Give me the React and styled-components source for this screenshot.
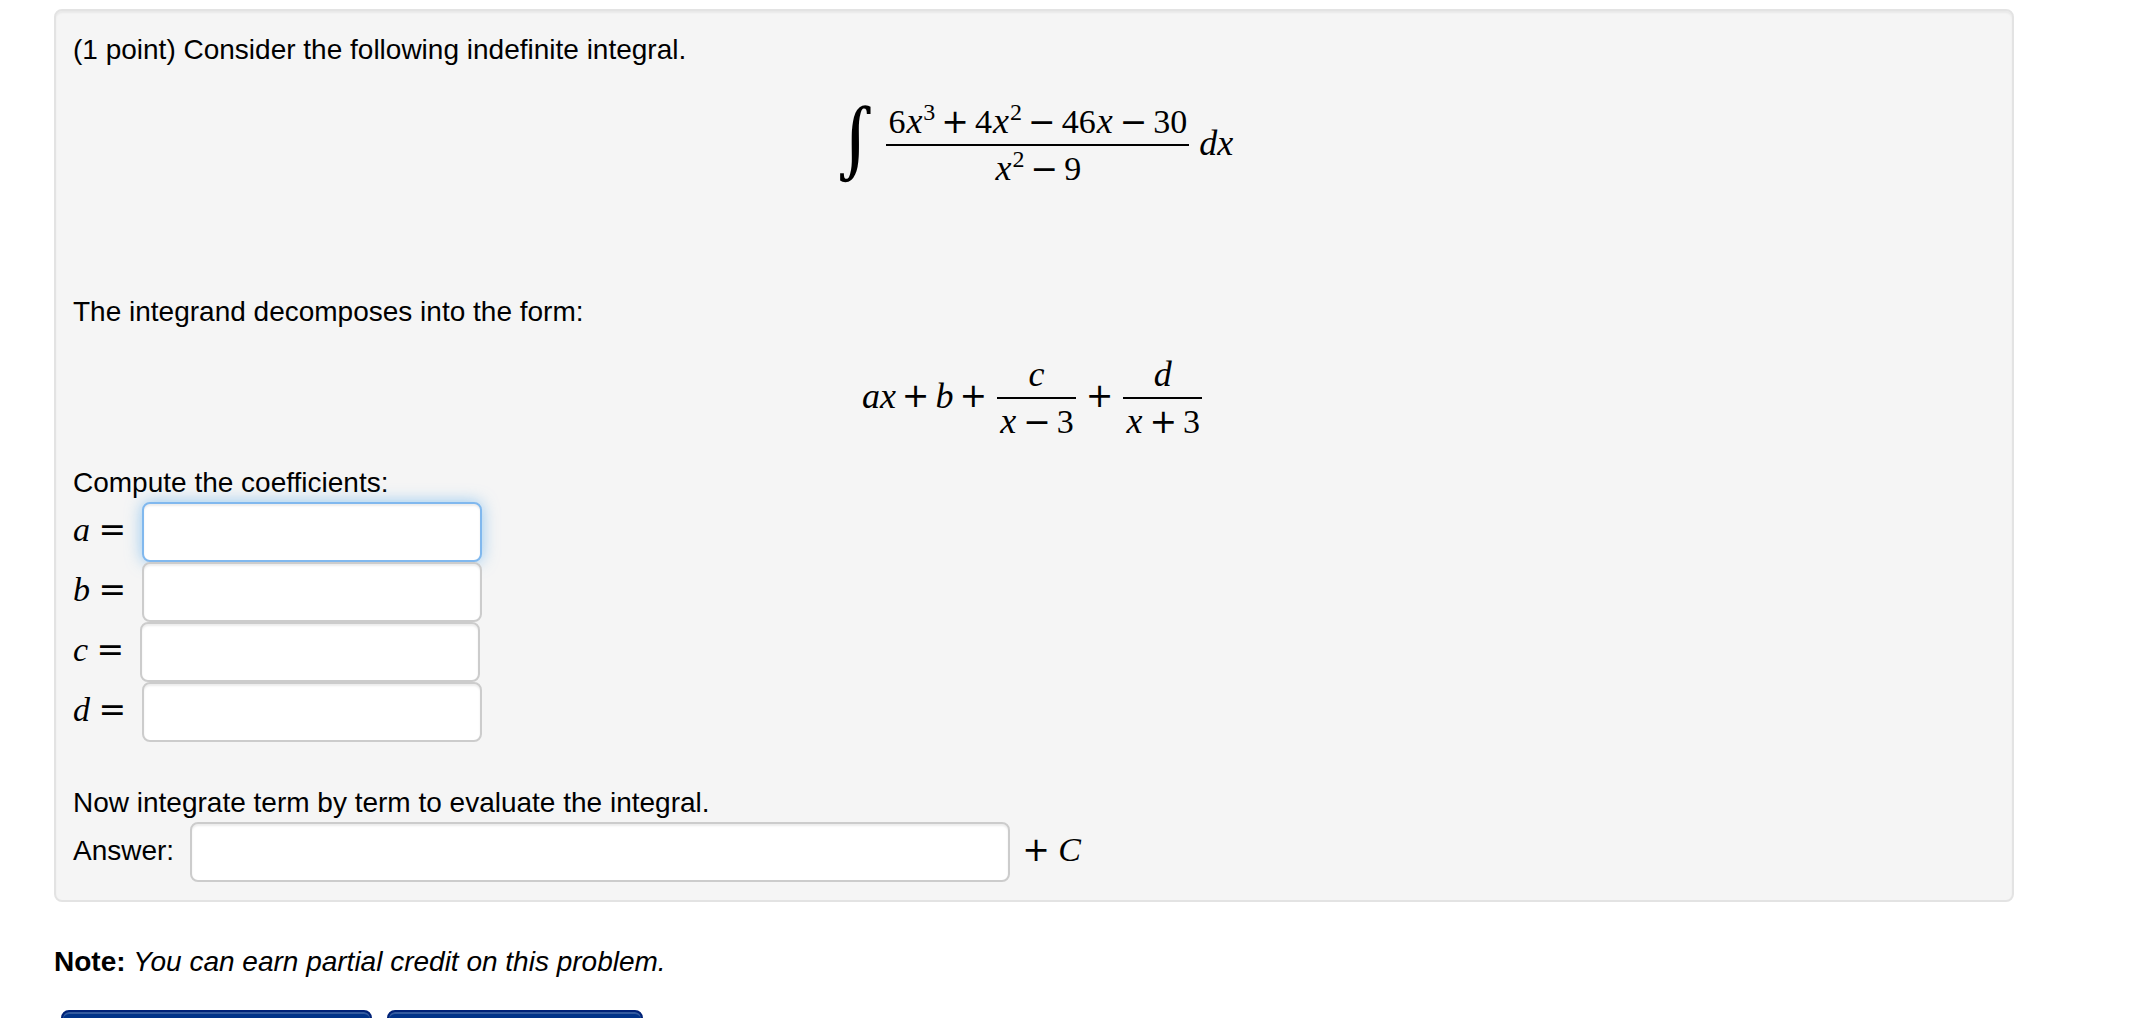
import React, { useState } from 'react';
import styled, { createGlobalStyle } from 'styled-components';

const GlobalStyle = createGlobalStyle`
  * {
    box-sizing: border-box;
  }

  body {
    margin: 0;
    background-color: #ffffff;
    color: #000000;
    font-family: 'Liberation Sans', Arial, sans-serif;
    font-size: 28px;
    line-height: 40px;
  }
`;

const Page = styled.main`
  height: 100vh;
  padding: 9px 122px 0 54px;
  overflow: hidden;
`;

const Problem = styled.section`
  padding: 18px 17px;
  background-color: #f5f5f5;
  border: 2px solid #e3e3e3;
  border-radius: 8px;
  box-shadow: inset 0 2px 2px rgba(0, 0, 0, 0.05);
`;

const Text = styled.p`
  margin: 0;
  padding-top: 2px;
  line-height: 38px;
`;

const MathText = styled.span`
  font-family: 'Liberation Serif', 'Times New Roman', serif;
  font-size: 34px;
  line-height: 40px;
  white-space: nowrap;

  sup {
    font-size: 24px;
    line-height: 0;
    vertical-align: 13px;
  }
`;

const Equation = styled(MathText)`
  display: flex;
  align-items: center;
  justify-content: center;
  margin: ${(props) => props.$margin};

  i {
    font-size: 36px;
    line-height: 0;
  }
`;

const Op = styled.span`
  padding: 0 ${(props) => (props.$tight ? '0' : '6px')};
  font-family: 'DejaVu Sans', sans-serif;
  font-size: 33px;
  line-height: 0;
`;

const Integral = styled.span`
  font-family: 'DejaVu Math TeX Gyre', 'DejaVu Serif', serif;
  font-size: 70px;
  line-height: 80px;
`;

const Fraction = styled.span`
  display: flex;
  flex-direction: column;
  margin: 0 ${(props) => (props.$wide ? '10px' : '4px')};
  text-align: center;

  i {
    margin: 0 1px;
  }
`;

const Numerator = styled.span`
  padding: 6px 2px 0;
  line-height: 44px;
  border-bottom: 2px solid #000000;
`;

const Denominator = styled.span`
  padding: 0 2px;
  line-height: 46px;
`;

const AnswerRow = styled.div`
  display: flex;
  align-items: center;
  height: 60px;
`;

const Label = styled.label`
  margin-right: 16px;
  padding-bottom: 2px;
`;

const Input = styled.input`
  width: ${(props) => (props.$wide ? '820px' : '340px')};
  height: 60px;
  padding: 8px 12px;
  background-color: #ffffff;
  border: 2px solid #cccccc;
  border-radius: 8px;
  box-shadow: inset 0 2px 2px rgba(0, 0, 0, 0.075);
  color: #555555;
  font: inherit;

  &:focus {
    border-color: #80b8ee;
    box-shadow: inset 0 2px 2px rgba(0, 0, 0, 0.075), 0 0 16px rgba(82, 168, 236, 0.6);
    outline: none;
  }
`;

const Constant = styled(MathText)`
  margin-left: 12px;
  padding-bottom: 4px;
`;

const IntegrateText = styled(Text)`
  margin-top: 40px;
`;

const Note = styled.p`
  margin: 40px 0 0;
`;

const ButtonGroup = styled.div`
  display: flex;
  gap: 15px;
  margin: 28px 0 0 7px;
`;

const Button = styled.button`
  width: ${(props) => props.$width};
  height: 60px;
  background-color: #003388;
  border: 2px solid #002277;
  border-radius: 8px;
  box-shadow: inset 0 2px 0 rgba(255, 255, 255, 0.2);
  color: #ffffff;
  font: inherit;
  cursor: pointer;
`;

const coefficients = ['a', 'b', 'c', 'd'];

const App = () => {
  const [answers, setAnswers] = useState({});

  const handleChange = (e) => {
    setAnswers({ ...answers, [e.target.name]: e.target.value });
  };

  return (
    <>
      <GlobalStyle />
      <Page>
        <Problem>
          <Text>(1 point) Consider the following indefinite integral.</Text>
          <Equation $margin="25px 0 99px">
            <Integral>∫</Integral>
            <Fraction $wide>
              <Numerator>
                6<i>x</i>
                <sup>3</sup>
                <Op>+</Op>4<i>x</i>
                <sup>2</sup>
                <Op>−</Op>46<i>x</i>
                <Op>−</Op>30
              </Numerator>
              <Denominator>
                <i>x</i>
                <sup>2</sup>
                <Op>−</Op>9
              </Denominator>
            </Fraction>
            <i>dx</i>
          </Equation>

          <Text>The integrand decomposes into the form:</Text>
          <Equation $margin="16px 0 17px">
            <i>ax</i>
            <Op>+</Op>
            <i>b</i>
            <Op>+</Op>
            <Fraction>
              <Numerator>
                <i>c</i>
              </Numerator>
              <Denominator>
                <i>x</i>
                <Op>−</Op>3
              </Denominator>
            </Fraction>
            <Op>+</Op>
            <Fraction>
              <Numerator>
                <i>d</i>
              </Numerator>
              <Denominator>
                <i>x</i>
                <Op>+</Op>3
              </Denominator>
            </Fraction>
          </Equation>

          <Text>Compute the coefficients:</Text>
          {coefficients.map((name) => (
            <AnswerRow key={name}>
              <Label htmlFor={name}>
                <MathText>
                  <i>{name}</i> <Op $tight>=</Op>
                </MathText>
              </Label>
              <Input
                id={name}
                name={name}
                type="text"
                autoComplete="off"
                autoFocus={name === 'a'}
                value={answers[name] || ''}
                onChange={handleChange}
              />
            </AnswerRow>
          ))}

          <IntegrateText>Now integrate term by term to evaluate the integral.</IntegrateText>
          <AnswerRow>
            <Label htmlFor="integral">Answer:</Label>
            <Input
              $wide
              id="integral"
              name="integral"
              type="text"
              autoComplete="off"
              value={answers.integral || ''}
              onChange={handleChange}
            />
            <Constant>
              <Op $tight>+</Op> <i>C</i>
            </Constant>
          </AnswerRow>
        </Problem>

        <Note>
          <strong>Note:</strong> <em>You can earn partial credit on this problem.</em>
        </Note>
        <ButtonGroup>
          <Button type="button" aria-label="Preview My Answers" $width="311px" />
          <Button type="button" aria-label="Submit Answers" $width="256px" />
        </ButtonGroup>
      </Page>
    </>
  );
};

export default App;
